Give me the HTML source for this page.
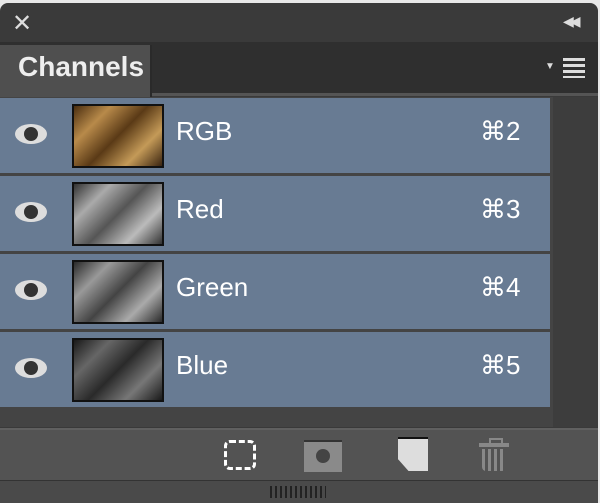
<html><head><style>
body{margin:0;width:600px;height:503px;background:#e8e8e8;overflow:hidden;font-family:"Liberation Sans",sans-serif}
.p{position:absolute;left:0;top:3px;width:598px;height:500px;background:#3a3a3a;border-radius:8px 8px 0 0;overflow:hidden}
.a{position:absolute}
.row{position:absolute;left:0;width:550px;height:75px;background:#687b93}
.row .t{position:absolute;left:72px;top:6px;width:88px;height:60px;border:2px solid #111}
.row .n{position:absolute;left:176px;top:18px;font-size:26px;color:#fff}
.row .k{position:absolute;left:480px;top:18px;font-size:26px;color:#fff}
.eye{position:absolute;left:15px;top:26px;width:32px;height:20px;border-radius:50%;background:#ddd}
.eye::after{content:"";position:absolute;left:9px;top:3px;width:14px;height:14px;border-radius:50%;background:#333}
</style></head><body><div class="p">
<div class="a" style="left:12px;top:6px;color:#ddd;font-size:24px">✕</div>
<div class="a" style="left:563px;top:10px;color:#ddd;font-size:14px;letter-spacing:-4px">◀◀</div>
<div class="a" style="left:0;top:39px;width:600px;height:52px;background:#2f2f2f"></div>
<div class="a" style="left:0;top:42px;width:150px;height:52px;background:#4f4f4f;border-right:2px solid #2a2a2a"></div>
<div class="a" style="left:18px;top:48px;color:#eee;font-size:28px;font-weight:bold">Channels</div>
<div class="a" style="left:152px;top:90px;width:448px;height:3px;background:#555"></div>
<div class="a" style="left:545px;top:58px;color:#ddd;font-size:10px">▼</div>
<div class="a" style="left:563px;top:55px;width:22px;height:20px;background:repeating-linear-gradient(#ddd 0 3px,transparent 3px 6px)"></div>
<div class="a" style="left:0;top:94px;width:600px;height:330px;background:#444"></div>
<div class="a" style="left:553px;top:94px;width:47px;height:330px;background:#3d3d3d"></div>
<div class="row" style="top:95px"><div class="eye"></div><div class="t" style="background:linear-gradient(135deg,#4a2e10,#b88a4a,#5a3a16,#c49a58,#3a2410)"></div><div class="n">RGB</div><div class="k">⌘2</div></div>
<div class="row" style="top:173px"><div class="eye"></div><div class="t" style="background:linear-gradient(135deg,#333,#aaa,#555,#bbb,#333)"></div><div class="n">Red</div><div class="k">⌘3</div></div>
<div class="row" style="top:251px"><div class="eye"></div><div class="t" style="background:linear-gradient(135deg,#2a2a2a,#999,#444,#aaa,#2a2a2a)"></div><div class="n">Green</div><div class="k">⌘4</div></div>
<div class="row" style="top:329px"><div class="eye"></div><div class="t" style="background:linear-gradient(135deg,#1a1a1a,#666,#2a2a2a,#777,#1a1a1a)"></div><div class="n">Blue</div><div class="k">⌘5</div></div>
<div class="a" style="left:0;top:425px;width:600px;height:50px;background:#535353;border-top:2px solid #606060"></div>
<div class="a" style="left:224px;top:437px;width:26px;height:24px;border:3px dashed #fff;border-radius:6px"></div>
<div class="a" style="left:304px;top:437px;width:38px;height:30px;background:#8a8a8a;border-top:2px solid #333"></div>
<div class="a" style="left:316px;top:446px;width:14px;height:14px;border-radius:50%;background:#444"></div>
<div class="a" style="left:398px;top:434px;width:30px;height:32px;background:#ddd;border-top:2px solid #111;clip-path:polygon(0 0,100% 0,100% 100%,35% 100%,0 65%)"></div>
<div class="a" style="left:482px;top:446px;width:24px;height:22px;background:repeating-linear-gradient(90deg,#888 0 3px,#535353 3px 6px);border-radius:0 0 4px 4px"></div>
<div class="a" style="left:479px;top:440px;width:30px;height:4px;background:#888"></div>
<div class="a" style="left:489px;top:435px;width:10px;height:5px;border:2px solid #888;border-bottom:none"></div>
<div class="a" style="left:0;top:477px;width:600px;height:23px;background:#4a4a4a;border-top:1px solid #333"></div>
<div class="a" style="left:270px;top:483px;width:56px;height:12px;background:repeating-linear-gradient(90deg,#222 0 2px,transparent 2px 5px)"></div>
</div></body></html>
